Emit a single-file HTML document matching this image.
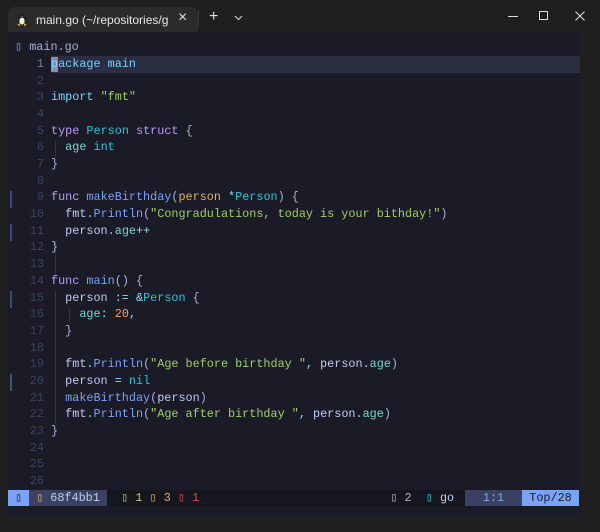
<!DOCTYPE html>
<html><head><meta charset="utf-8"><style>
*{margin:0;padding:0;box-sizing:border-box}
body{width:600px;height:532px;background:#1f1f1f;overflow:hidden;position:relative;font-family:"Liberation Mono",monospace;font-size:11.8px}
.tb{position:absolute;left:0;top:0;width:600px;height:32px;background:#1f1f1f}
.tab{position:absolute;left:8px;top:7px;width:190px;height:26px;background:#2b2b2b;border-radius:7px 7px 0 0;font-family:"Liberation Sans",sans-serif;font-size:12px;color:#e6e6e6}
.ed{position:absolute;left:7px;top:32px;width:573px;height:484px;background:#1a1b26}
.l{position:absolute;left:0;height:17px;line-height:17px;white-space:pre;color:#c0caf5}
.n{position:absolute;width:37px;text-align:right;color:#3b4261;white-space:pre}
.c{position:absolute;left:44px}
.k{color:#bb9af7}.i{color:#7dcfff}.f{color:#7aa2f7}.t{color:#2ac3de}.s{color:#9ece6a}.p{color:#e0af68}.o{color:#ff9e64}.a{color:#73daca}.b{color:#a9b1d6}.u{color:#89ddff}
.g{position:absolute;width:1px;background:#2e3248}
.gs{position:absolute;left:3px;width:2px;background:#394b70}
.sb{position:absolute;top:490px;height:16px;line-height:16px;white-space:pre}
</style></head><body>
<div class="tb"></div>
<div class="tab">
<svg style="position:absolute;left:8px;top:5px" width="12" height="14" viewBox="0 0 12 14"><ellipse cx="6" cy="8" rx="4" ry="5" fill="#222"/><ellipse cx="6" cy="9" rx="2.6" ry="3.6" fill="#eee"/><circle cx="6" cy="3.5" r="2.5" fill="#222"/><path d="M1 13 L4 11 L4 14 Z M11 13 L8 11 L8 14Z" fill="#e8a400"/><path d="M5 4.5 L7 4.5 L6 5.5Z" fill="#e8a400"/></svg>
<span style="position:absolute;left:28px;top:6px;width:132px;overflow:hidden;white-space:nowrap">main.go (~/repositories/go-st</span>
<span style="position:absolute;left:170px;top:2px;font-size:16px;color:#ddd">×</span>
</div>
<div style="position:absolute;left:198px;top:10px;width:1px;height:16px;background:#3a3a3a"></div>
<span style="position:absolute;left:209px;top:8px;color:#ddd;font-family:'Liberation Sans';font-size:16px">+</span>
<svg style="position:absolute;left:234px;top:15px" width="9" height="6"><path d="M1 1 L4.5 4.5 L8 1" stroke="#ccc" fill="none" stroke-width="1.2"/></svg>
<div style="position:absolute;left:508px;top:16px;width:10px;height:1px;background:#ddd"></div>
<div style="position:absolute;left:539px;top:11px;width:9px;height:9px;border:1px solid #ddd"></div>
<svg style="position:absolute;left:575px;top:11px" width="10" height="10"><path d="M0.5 0.5 L9.5 9.5 M9.5 0.5 L0.5 9.5" stroke="#ddd" stroke-width="1.1"/></svg>
<div class="ed">
<div style="position:absolute;left:44px;top:24px;width:529px;height:17px;background:#292e42"></div>
<div style="position:absolute;left:44px;top:25px;width:7px;height:15px;background:#a9b1d6;opacity:.75"></div>
<div class="l" style="top:7px;left:8px"><span style="color:#7aa2f7">▯</span> <span style="color:#a9b1d6">main.go</span></div>
<div class="g" style="left:48px;top:109px;height:17px"></div>
<div class="g" style="left:48px;top:209px;height:34px"></div>
<div class="g" style="left:48px;top:259px;height:133px"></div>
<div class="g" style="left:62px;top:276px;height:17px"></div>
<div class="gs" style="top:159px;height:17px"></div>
<div class="gs" style="top:192px;height:17px"></div>
<div class="gs" style="top:259px;height:17px"></div>
<div class="gs" style="top:342px;height:17px;background:#41a6b5;opacity:.5"></div>
<div id="code"></div>
</div>
<script>
var L=[
'<span class="i">package</span> <span class="i">main</span>','',
'<span class="i">import</span> <span class="s">"fmt"</span>','',
'<span class="k">type</span> <span class="t">Person</span> <span class="k">struct</span> <span class="b">{</span>',
'  <span class="a">age</span> <span class="t">int</span>','<span class="b">}</span>','',
'<span class="k">func</span> <span class="f">makeBirthday</span><span class="b">(</span><span class="p">person</span> <span class="u">*</span><span class="t">Person</span><span class="b">) {</span>',
'  fmt<span class="u">.</span><span class="f">Println</span><span class="b">(</span><span class="s">"Congradulations, today is your bithday!"</span><span class="b">)</span>',
'  person<span class="u">.</span><span class="a">age</span><span class="u">++</span>','<span class="b">}</span>','',
'<span class="k">func</span> <span class="f">main</span><span class="b">() {</span>',
'  person <span class="u">:=</span> <span class="u">&amp;</span><span class="t">Person</span> <span class="b">{</span>',
'    <span class="a">age</span><span class="u">:</span> <span class="o">20</span><span class="u">,</span>','  <span class="b">}</span>','',
'  fmt<span class="u">.</span><span class="f">Println</span><span class="b">(</span><span class="s">"Age before birthday "</span><span class="u">,</span> person<span class="u">.</span><span class="a">age</span><span class="b">)</span>',
'  person <span class="u">=</span> <span class="t">nil</span>',
'  <span class="f">makeBirthday</span><span class="b">(</span>person<span class="b">)</span>',
'  fmt<span class="u">.</span><span class="f">Println</span><span class="b">(</span><span class="s">"Age after birthday "</span><span class="u">,</span> person<span class="u">.</span><span class="a">age</span><span class="b">)</span>',
'<span class="b">}</span>','','',''];
var h='';for(var i=0;i<26;i++){var y=24+i*16.68;h+='<div class="l" style="top:'+y+'px;width:573px"><span class="n"'+(i==0?' style="color:#737aa2"':'')+'>'+(i+1)+'</span><span class="c">'+L[i]+'</span></div>';}
document.getElementById('code').innerHTML=h;
</script>
<div class="sb" style="left:8px;width:21px;background:#7aa2f7;color:#1a1b26;text-align:center">▯</div>
<div class="sb" style="left:29px;width:78px;background:#3b4261;color:#c0caf5"> <span style="color:#e0af68">▯</span> 68f4bb1</div>
<div class="sb" style="left:107px;width:358px;background:#16161e;color:#c0caf5">  <span style="color:#9ece6a">▯ 1</span> <span style="color:#e0af68">▯ 3</span> <span style="color:#db4b4b">▯ 1</span>                           <span style="color:#a9b1d6">▯ 2</span>  <span style="color:#2ac3de">▯</span> go</div>
<div class="sb" style="left:465px;width:57px;background:#3b4261;color:#7aa2f7;text-align:center">1:1</div>
<div class="sb" style="left:522px;width:57px;background:#7aa2f7;color:#1a1b26;text-align:center">Top/28</div>
</body></html>
